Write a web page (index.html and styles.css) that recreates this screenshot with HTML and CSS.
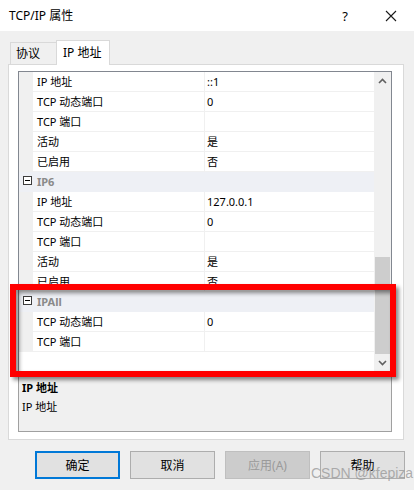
FILE: index.html
```html
<!DOCTYPE html>
<html lang="zh-CN">
<head>
<meta charset="utf-8">
<title>TCP/IP 属性</title>
<link rel="stylesheet" href="styles.css">
</head>
<body>
<div class="window">
  <div class="titlebar">
    <span class="title">TCP/IP 属性</span>
    <span class="help">?</span>
    <span class="close"><svg width="12" height="12" viewBox="0 0 12 12"><path d="M1 1 L11 11 M11 1 L1 11" stroke="#1a1a1a" stroke-width="1.1" fill="none"/></svg></span>
  </div>
  <div class="body">
    <div class="tabs">
      <div class="tab">协议</div>
      <div class="tab active">IP 地址</div>
    </div>
    <div class="panel">
      <div class="grid">
        <div class="rows">
          <div class="row"><div class="gutter"></div><div class="name">IP 地址</div><div class="value">::1</div></div>
          <div class="row"><div class="gutter"></div><div class="name">TCP 动态端口</div><div class="value">0</div></div>
          <div class="row"><div class="gutter"></div><div class="name">TCP 端口</div><div class="value"></div></div>
          <div class="row"><div class="gutter"></div><div class="name">活动</div><div class="value">是</div></div>
          <div class="row"><div class="gutter"></div><div class="name">已启用</div><div class="value">否</div></div>
          <div class="row cat"><div class="gutter"><span class="toggle"></span></div><div class="cat-name">IP6</div></div>
          <div class="row"><div class="gutter"></div><div class="name">IP 地址</div><div class="value">127.0.0.1</div></div>
          <div class="row"><div class="gutter"></div><div class="name">TCP 动态端口</div><div class="value">0</div></div>
          <div class="row"><div class="gutter"></div><div class="name">TCP 端口</div><div class="value"></div></div>
          <div class="row"><div class="gutter"></div><div class="name">活动</div><div class="value">是</div></div>
          <div class="row"><div class="gutter"></div><div class="name">已启用</div><div class="value">否</div></div>
          <div class="row cat"><div class="gutter"><span class="toggle"></span></div><div class="cat-name">IPAll</div></div>
          <div class="row"><div class="gutter"></div><div class="name">TCP 动态端口</div><div class="value">0</div></div>
          <div class="row"><div class="gutter"></div><div class="name">TCP 端口</div><div class="value"></div></div>
          <div class="filler"></div>
        </div>
        <div class="scrollbar">
          <div class="arrow"><svg width="9" height="6" viewBox="0 0 9 6"><path d="M1 5 L4.5 1.5 L8 5" stroke="#606060" stroke-width="1.6" fill="none"/></svg></div>
          <div class="track"><div class="thumb"></div></div>
          <div class="arrow"><svg width="9" height="6" viewBox="0 0 9 6"><path d="M1 1 L4.5 4.5 L8 1" stroke="#606060" stroke-width="1.6" fill="none"/></svg></div>
        </div>
      </div>
      <div class="desc">
        <div class="desc-title">IP 地址</div>
        <div class="desc-text">IP 地址</div>
      </div>
    </div>
    <div class="buttons">
      <button class="btn default">确定</button>
      <button class="btn">取消</button>
      <button class="btn disabled">应用(A)</button>
      <button class="btn">帮助</button>
    </div>
  </div>
  <div class="highlight"></div>
  <div class="watermark">CSDN @kfepiza</div>
</div>
</body>
</html>
```

FILE: styles.css
```css
* { box-sizing: border-box; }
html, body {
  margin: 0;
  padding: 0;
  background: #f0f0f0;
}
body {
  font-family: "Noto Sans", "Noto Sans CJK SC", sans-serif;
  font-size: 12px;
  color: #000;
}
.window {
  position: relative;
  width: 414px;
  height: 490px;
  overflow: hidden;
  background: #f0f0f0;
}
.titlebar {
  height: 31px;
  background: #fff;
  display: flex;
  align-items: center;
  padding-left: 9px;
}
.title {
  font-size: 12px;
  flex: 1;
  line-height: 16px;
}
.help {
  width: 46px;
  text-align: center;
  font-size: 13px;
  margin-right: 0;
}
.close {
  width: 46px;
  height: 31px;
  display: flex;
  align-items: center;
  justify-content: center;
}
.body {
  padding: 0 9px 0 8px;
}
.tabs {
  display: flex;
  align-items: flex-end;
  margin-top: 9px;
  padding-left: 2px;
  height: 24px;
  position: relative;
  z-index: 2;
}
.tab {
  height: 22px;
  width: 46px;
  border: 1px solid #d9d9d9;
  border-bottom: none;
  border-right: none;
  background: #f0f0f0;
  padding-left: 5px;
  line-height: 21px;
  font-size: 12px;
}
.tab.active {
  height: 25px;
  width: 54px;
  background: #fff;
  border-right: 1px solid #d9d9d9;
  padding-left: 6px;
  line-height: 23px;
  margin-bottom: -1px;
}
.panel {
  width: 396px;
  background: #fff;
  border: 1px solid #d9d9d9;
  padding: 6px 11px 7px 9px;
  position: relative;
  z-index: 1;
}
.grid {
  display: flex;
  height: 301px;
  border: 1px solid #828790;
  background: #fff;
}
.rows {
  width: 356px;
  display: flex;
  flex-direction: column;
}
.row {
  display: flex;
  height: 20px;
  font-size: 11px;
  line-height: 19px;
}
.gutter {
  width: 14px;
  background: #f0f0f0;
  flex: none;
  display: flex;
  align-items: center;
  justify-content: center;
}
.name {
  width: 172px;
  padding-left: 4px;
  border-right: 1px solid #f0f0f0;
  border-bottom: 1px solid #f0f0f0;
  white-space: nowrap;
}
.value {
  flex: 1;
  padding-left: 2px;
  border-bottom: 1px solid #f0f0f0;
}
.row.cat {
  background: #eef0f5;
}
.row.cat .gutter {
  background: #eef0f5;
}
.cat-name {
  flex: 1;
  padding-left: 4px;
  font-weight: bold;
  color: #8a8a8a;
  border-bottom: 1px solid #eef0f5;
}
.toggle {
  width: 9px;
  height: 9px;
  border: 1px solid #3c3c3c;
  background: #fff;
  position: relative;
  margin-top: -4px;
  margin-left: 2px;
  display: flex;
  align-items: center;
  justify-content: center;
}
.toggle::after {
  content: "";
  width: 5px;
  height: 1px;
  background: #000;
}
.filler {
  flex: 1;
}
.scrollbar {
  width: 17px;
  background: #f0f0f0;
  display: flex;
  flex-direction: column;
}
.arrow {
  height: 17px;
  display: flex;
  align-items: center;
  justify-content: center;
}
.track {
  flex: 1;
  display: flex;
  flex-direction: column;
  justify-content: flex-end;
  align-items: center;
}
.thumb {
  width: 15px;
  height: 97px;
  background: #cdcdcd;
}
.desc {
  margin-top: 4px;
  height: 56px;
  border: 1px solid #a0a0a0;
  background: #f0f0f0;
  padding: 2px 3px;
}
.desc-title {
  font-weight: bold;
  font-size: 11px;
  line-height: 18px;
}
.desc-text {
  font-size: 11px;
  line-height: 20px;
}
.buttons {
  display: flex;
  justify-content: flex-end;
  gap: 10px;
  margin-top: 11px;
}
.btn {
  width: 85px;
  height: 28px;
  background: #e1e1e1;
  border: 1px solid #adadad;
  font-family: "Noto Sans", "Noto Sans CJK SC", sans-serif;
  font-size: 12px;
  color: #000;
  padding: 0;
  margin: 0;
}
.btn.default {
  border: 2px solid #0078d7;
}
.btn.disabled {
  background: #cccccc;
  border-color: #bfbfbf;
  color: #9a9a9a;
}
.highlight {
  position: absolute;
  left: 10px;
  top: 284px;
  width: 386px;
  height: 93px;
  border: 6px solid #ff0000;
  box-shadow: 3px 3px 4px rgba(0,0,0,0.45), inset 3px 3px 4px rgba(0,0,0,0.45);
  z-index: 5;
}
.watermark {
  position: absolute;
  left: 311px;
  top: 465px;
  font-family: "Liberation Sans", "Noto Sans", sans-serif;
  font-size: 14px;
  line-height: 16px;
  color: rgba(150,150,150,0.75);
  z-index: 6;
}
```
